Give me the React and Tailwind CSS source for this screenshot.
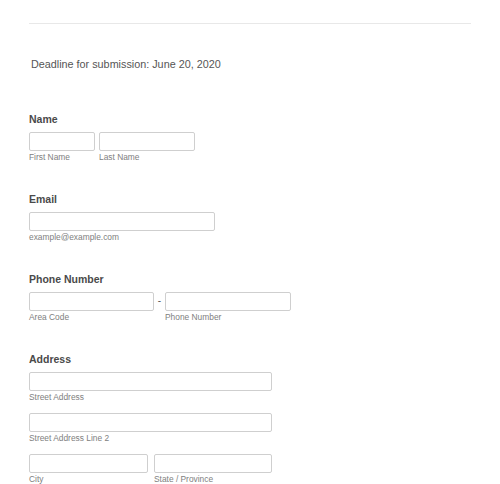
export default function App() {
  return (
    <div className="min-h-screen bg-white px-[29px] font-['Liberation_Sans',Arial,sans-serif]">
      <p className="-mt-[13px] pl-[2px] text-[10.8px] leading-[14px] text-[#777]">Please type your application below</p>
      <div className="mt-[22px] h-px bg-[#e8e8e8]" />
      <p className="mt-[33px] pl-[2px] text-[10.8px] leading-[14px] text-[#555]">Deadline for submission: June 20, 2020</p>

      <Section label="Name" first>
        <div className="flex gap-[4px]">
          <Field width="w-[66px]" sub="First Name" />
          <Field width="w-[96px]" sub="Last Name" />
        </div>
      </Section>

      <Section label="Email">
        <Field width="w-[186px]" sub="example@example.com" />
      </Section>

      <Section label="Phone Number">
        <div className="flex">
          <Field width="w-[125px]" sub="Area Code" />
          <span className="w-[11px] text-center text-[10px] leading-[18px] text-[#555]">-</span>
          <Field width="w-[126px]" sub="Phone Number" />
        </div>
      </Section>

      <Section label="Address">
        <Field width="w-[243px]" sub="Street Address" />
        <div className="mt-[10px]">
          <Field width="w-[243px]" sub="Street Address Line 2" />
        </div>
        <div className="mt-[10px] flex gap-[6px]">
          <Field width="w-[119px]" sub="City" />
          <Field width="w-[118px]" sub="State / Province" />
        </div>
      </Section>
    </div>
  );
}

function Section({ label, first, children }) {
  return (
    <div className={first ? 'mt-[42px]' : 'mt-[30px]'}>
      <h3 className="h-[13px] text-[10.5px] font-bold leading-[13px] text-[#4a4a4a]">{label}</h3>
      <div className="mt-[6px]">{children}</div>
    </div>
  );
}

function Field({ width, sub }) {
  return (
    <div className={width}>
      <div className="h-[19px] w-full rounded-[2px] border border-[#cfcfcf] bg-white" />
      <p className="h-[12px] text-[8.4px] leading-[12px] text-[#808080]">{sub}</p>
    </div>
  );
}
